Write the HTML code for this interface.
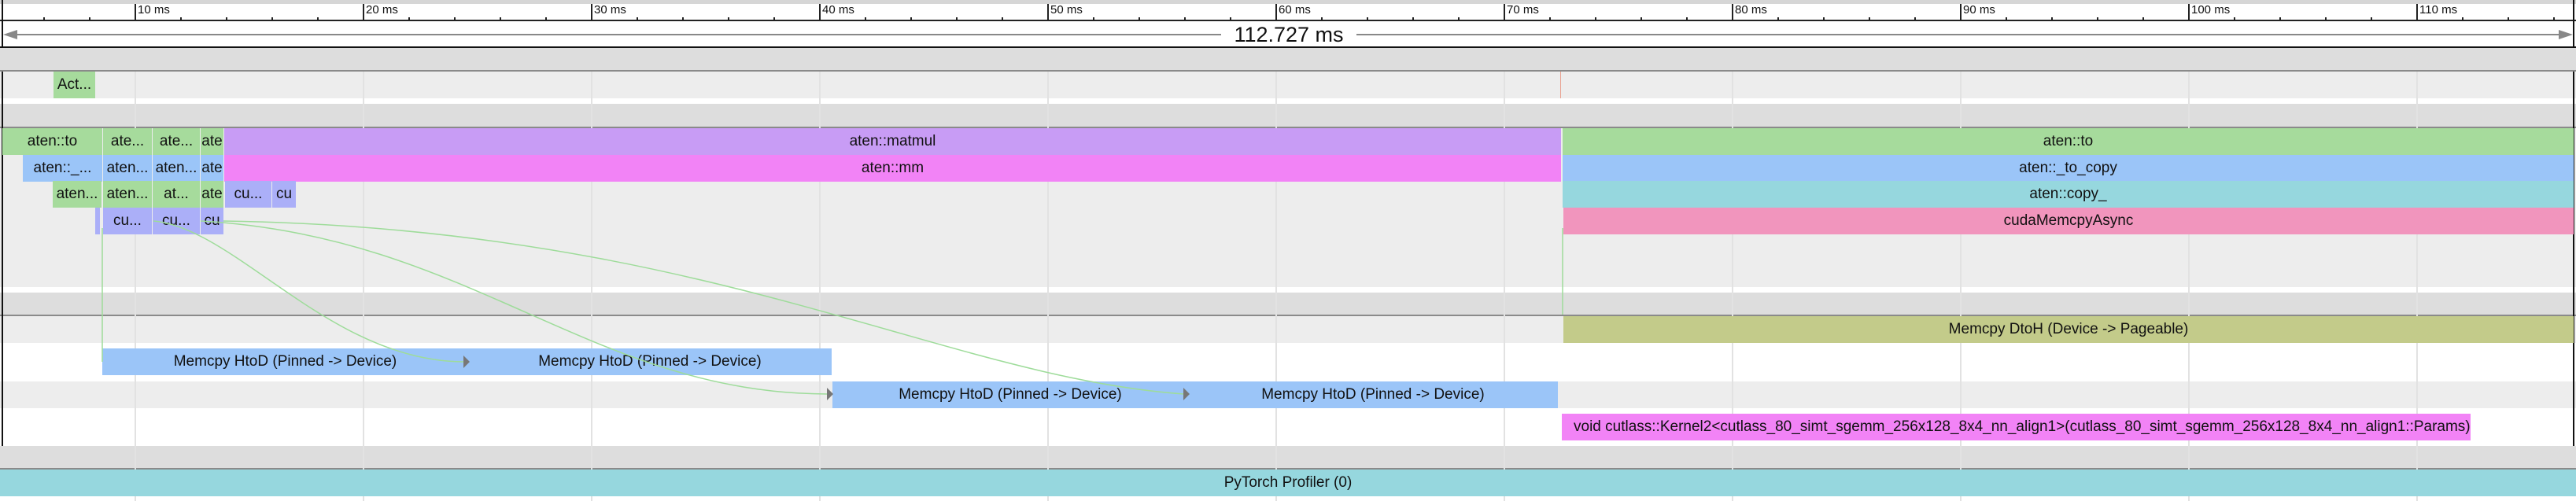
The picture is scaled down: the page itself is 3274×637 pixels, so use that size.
<!DOCTYPE html>
<html><head><meta charset="utf-8"><style>
*{margin:0;padding:0;box-sizing:border-box}
body{width:3274px;height:637px;overflow:hidden;background:#fff;position:relative;font-family:"Liberation Sans",Arial,sans-serif}
.a{position:absolute}
.b{position:absolute;height:34px;line-height:34px;font-size:19px;color:#111;text-align:center;overflow:hidden;white-space:nowrap}
.g{background:#a6db9c}.bl{background:#9bc5f8}.pu{background:#c89cf5}.mg{background:#f283f6}.lv{background:#abaff8}.cy{background:#96d7de}.pk{background:#f195bd}.ol{background:#c3cb8a}
.hd{position:absolute;left:0;width:3274px;background:#dddddd;border-bottom:2px solid #8a8a8a}
.lt{position:absolute;left:0;width:3274px;background:#ededed}
.tl{position:absolute;top:4px;font-size:15px;color:#111}
</style></head><body>
<div class="a" style="left:0;top:0;width:3274px;height:5px;background:#d6d6d6"></div>
<div class="hd" style="top:60px;height:31px"></div>
<div class="lt" style="top:91px;height:34px"></div>
<div class="hd" style="top:132px;height:31px"></div>
<div class="lt" style="top:163px;height:202px"></div>
<div class="hd" style="top:372px;height:30px"></div>
<div class="lt" style="top:402px;height:34px"></div>
<div class="lt" style="top:485px;height:34px"></div>
<div class="hd" style="top:567px;height:30px"></div>
<svg class="a" style="left:0;top:0" width="3274" height="637">
<g stroke="#e2e2e2" stroke-width="2">
<line x1="172" y1="91" x2="172" y2="637"/><line x1="462" y1="91" x2="462" y2="637"/><line x1="752" y1="91" x2="752" y2="637"/><line x1="1042" y1="91" x2="1042" y2="637"/><line x1="1332" y1="91" x2="1332" y2="637"/><line x1="1622" y1="91" x2="1622" y2="637"/><line x1="1912" y1="91" x2="1912" y2="637"/><line x1="2202" y1="91" x2="2202" y2="637"/><line x1="2492" y1="91" x2="2492" y2="637"/><line x1="2782" y1="91" x2="2782" y2="637"/><line x1="3072" y1="91" x2="3072" y2="637"/>
</g></svg>
<div class="a" style="left:0;top:25px;width:3274px;height:2px;background:#222"></div>
<div class="a" style="left:0;top:59px;width:3274px;height:2px;background:#111"></div>
<svg class="a" style="left:0;top:0" width="3274" height="60">
<g stroke="#222" stroke-width="2">
<line x1="172" y1="5" x2="172" y2="26"/><line x1="462" y1="5" x2="462" y2="26"/><line x1="752" y1="5" x2="752" y2="26"/><line x1="1042" y1="5" x2="1042" y2="26"/><line x1="1332" y1="5" x2="1332" y2="26"/><line x1="1622" y1="5" x2="1622" y2="26"/><line x1="1912" y1="5" x2="1912" y2="26"/><line x1="2202" y1="5" x2="2202" y2="26"/><line x1="2492" y1="5" x2="2492" y2="26"/><line x1="2782" y1="5" x2="2782" y2="26"/><line x1="3072" y1="5" x2="3072" y2="26"/>
<path d="M56 22V26M114 22V26M230 22V26M288 22V26M346 22V26M404 22V26M520 22V26M578 22V26M636 22V26M694 22V26M810 22V26M868 22V26M926 22V26M984 22V26M1100 22V26M1158 22V26M1216 22V26M1274 22V26M1390 22V26M1448 22V26M1506 22V26M1564 22V26M1680 22V26M1738 22V26M1796 22V26M1854 22V26M1970 22V26M2028 22V26M2086 22V26M2144 22V26M2260 22V26M2318 22V26M2376 22V26M2434 22V26M2550 22V26M2608 22V26M2666 22V26M2724 22V26M2840 22V26M2898 22V26M2956 22V26M3014 22V26M3130 22V26M3188 22V26M3246 22V26"/>
</g>
<line x1="3" y1="0" x2="3" y2="60" stroke="#111" stroke-width="2"/>
<line x1="3271" y1="0" x2="3271" y2="60" stroke="#111" stroke-width="2"/>
<line x1="10" y1="44" x2="1552" y2="44" stroke="#888" stroke-width="2"/>
<line x1="1724" y1="44" x2="3262" y2="44" stroke="#888" stroke-width="2"/>
<path d="M4 44L22 38V50Z" fill="#888"/><path d="M3270 44L3252 38V50Z" fill="#888"/>
</svg>
<div class="tl" style="left:175px">10 ms</div><div class="tl" style="left:465px">20 ms</div><div class="tl" style="left:755px">30 ms</div><div class="tl" style="left:1045px">40 ms</div><div class="tl" style="left:1335px">50 ms</div><div class="tl" style="left:1625px">60 ms</div><div class="tl" style="left:1915px">70 ms</div><div class="tl" style="left:2205px">80 ms</div><div class="tl" style="left:2495px">90 ms</div><div class="tl" style="left:2785px">100 ms</div><div class="tl" style="left:3075px">110 ms</div>
<div class="a" style="left:1552px;top:29px;width:172px;text-align:center;font-size:27px;line-height:30px;color:#111">112.727 ms</div>
<div class="a" style="left:2px;top:91px;width:2px;height:476px;background:#111"></div>
<div class="a" style="left:3270px;top:91px;width:2px;height:476px;background:#111"></div>
<div class="b g" style="left:68px;top:91px;width:53px">Act...</div>
<div class="a" style="left:1983px;top:91px;width:1px;height:34px;background:#e8a090"></div>
<div class="b g" style="left:3px;top:163px;width:127px">aten::to</div>
<div class="b g" style="left:131px;top:163px;width:62px">ate...</div>
<div class="b g" style="left:194px;top:163px;width:60px">ate...</div>
<div class="b g" style="left:255px;top:163px;width:29px">ate</div>
<div class="b pu" style="left:285px;top:163px;width:1699px">aten::matmul</div>
<div class="b g" style="left:1986px;top:163px;width:1285px">aten::to</div>
<div class="b bl" style="left:29px;top:197px;width:101px">aten::_...</div>
<div class="b bl" style="left:131px;top:197px;width:62px">aten...</div>
<div class="b bl" style="left:194px;top:197px;width:60px">aten...</div>
<div class="b bl" style="left:255px;top:197px;width:29px">ate</div>
<div class="b mg" style="left:285px;top:197px;width:1699px">aten::mm</div>
<div class="b bl" style="left:1986px;top:197px;width:1285px">aten::_to_copy</div>
<div class="b g" style="left:67px;top:230px;width:62px">aten...</div>
<div class="b g" style="left:131px;top:230px;width:62px">aten...</div>
<div class="b g" style="left:194px;top:230px;width:60px">at...</div>
<div class="b g" style="left:255px;top:230px;width:29px">ate</div>
<div class="b lv" style="left:286px;top:230px;width:59px">cu...</div>
<div class="b lv" style="left:346px;top:230px;width:30px">cu</div>
<div class="b cy" style="left:1986px;top:230px;width:1285px">aten::copy_</div>
<div class="b lv" style="left:121px;top:264px;width:6px"></div>
<div class="b lv" style="left:131px;top:264px;width:62px">cu...</div>
<div class="b lv" style="left:194px;top:264px;width:60px">cu...</div>
<div class="b lv" style="left:255px;top:264px;width:29px">cu</div>
<div class="b pk" style="left:1987px;top:264px;width:1284px">cudaMemcpyAsync</div>
<div class="b ol" style="left:1987px;top:402px;width:1284px">Memcpy DtoH (Device -&gt; Pageable)</div>
<div class="b bl" style="left:130px;top:443px;width:465px">Memcpy HtoD (Pinned -&gt; Device)</div>
<div class="b bl" style="left:595px;top:443px;width:462px">Memcpy HtoD (Pinned -&gt; Device)</div>
<div class="b bl" style="left:1058px;top:485px;width:452px">Memcpy HtoD (Pinned -&gt; Device)</div>
<div class="b bl" style="left:1510px;top:485px;width:470px">Memcpy HtoD (Pinned -&gt; Device)</div>
<div class="b mg" style="left:1985px;top:526px;width:1155px;text-align:left;padding-left:15px">void cutlass::Kernel2&lt;cutlass_80_simt_sgemm_256x128_8x4_nn_align1&gt;(cutlass_80_simt_sgemm_256x128_8x4_nn_align1::Params)</div>
<svg class="a" style="left:0;top:0" width="3274" height="637">
<g fill="none" stroke="#9edc9a" stroke-width="1.5">
<path d="M130 290V460"/>
<path d="M1986 290V400"/>
<path d="M195 281C300 290 420 460 590 460"/>
<path d="M255 281C600 300 750 500 1052 501"/>
<path d="M284 281C900 290 1200 480 1505 501"/>
</g>
<g fill="#777"><path d="M589 452L597 460L589 468Z"/><path d="M1051 493L1059 501L1051 509Z"/><path d="M1504 493L1512 501L1504 509Z"/></g>
</svg>
<div class="b cy" style="left:0;top:597px;width:3274px;height:34px">PyTorch Profiler (0)</div>
</body></html>
